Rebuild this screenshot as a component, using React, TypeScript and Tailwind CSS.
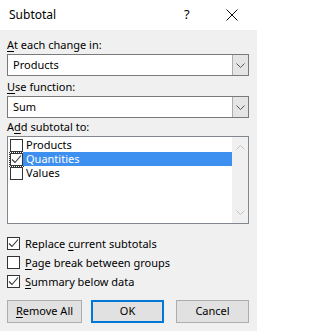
import React from 'react';

const font = { fontFamily: '"Noto Sans", "Open Sans", sans-serif' };

const Check = () => (
    <svg viewBox="0 0 11 11" width="11" height="11">
        <path d="M1 5.5 L4 8.5 L10 1.5" fill="none" stroke="#333" strokeWidth="1.1" />
    </svg>
);

const Box = ({ checked, focus }: { checked?: boolean; focus?: boolean }) => (
    <div className={`w-[13px] h-[13px] shrink-0 bg-white border border-[#333] flex items-center justify-center ${focus ? 'outline outline-1 outline-dotted outline-[#333]' : ''}`}>
        {checked && <Check />}
    </div>
);

const Chevron = ({ up }: { up?: boolean }) => (
    <svg width="9" height="5" viewBox="0 0 9 5">
        <path d={up ? 'M0.5 4.5 L4.5 0.5 L8.5 4.5' : 'M0.5 0.5 L4.5 4.5 L8.5 0.5'} fill="none" stroke="currentColor" strokeWidth="1" />
    </svg>
);

const Combo = ({ value }: { value: string }) => (
    <div className="h-[22px] flex border border-[#7a7a7a] bg-white">
        <div className="flex-1 pl-[5px] flex items-center text-[11px] text-black">{value}</div>
        <div className="w-[16px] bg-[#e5e5e5] border-l border-[#adadad] flex items-center justify-center text-[#555]">
            <Chevron />
        </div>
    </div>
);

const Label = ({ first, rest, className = '' }: { first: string; rest: string; className?: string }) => (
    <div className={`text-[11px] leading-[16px] text-black ${className}`}>
        <span className="underline underline-offset-2">{first}</span>
        {rest}
    </div>
);

const items = [
    { name: 'Products', checked: false },
    { name: 'Quantities', checked: true, selected: true },
    { name: 'Values', checked: false },
];

const options = [
    { pre: 'Replace ', u: 'c', post: 'urrent subtotals', checked: true },
    { pre: '', u: 'P', post: 'age break between groups', checked: false },
    { pre: '', u: 'S', post: 'ummary below data', checked: true },
];

export default function App() {
    return (
        <div className="w-[257px] h-[331px] bg-[#f0f0f0] flex flex-col overflow-hidden" style={font}>
            {/* Title bar */}
            <div className="h-[30px] bg-white flex items-center shrink-0">
                <span className="pl-[9px] text-[12px] text-black flex-1">Subtotal</span>
                <span className="text-[13px] text-black w-[14px] mr-[28px]">?</span>
                <svg width="12" height="12" viewBox="0 0 12 12" className="mr-[19px]">
                    <path d="M0.5 0.5 L11.5 11.5 M11.5 0.5 L0.5 11.5" stroke="#111" strokeWidth="1" />
                </svg>
            </div>

            {/* Body */}
            <div className="pl-[7px] pr-[8px] pt-[7px] flex flex-col">
                <Label first="A" rest="t each change in:" className="h-[17px]" />
                <Combo value="Products" />
                <Label first="U" rest="se function:" className="h-[17px] mt-[3px]" />
                <Combo value="Sum" />
                <div className="h-[18px] text-[11px] leading-[18px] text-black">
                    A<span className="underline underline-offset-2">d</span>d subtotal to:
                </div>

                {/* List */}
                <div className="h-[88px] border border-[#828790] bg-white flex">
                    <div className="flex-1 pl-[2px] pt-[1px] flex flex-col">
                        {items.map((it) => (
                            <div key={it.name} className="h-[14px] flex items-center">
                                <Box checked={it.checked} focus={it.selected} />
                                <div className={`flex-1 h-[14px] pl-[3px] flex items-center text-[11px] leading-[14px] ${it.selected ? 'bg-[#3d90ef] text-white' : 'text-black'}`}>
                                    {it.name}
                                </div>
                            </div>
                        ))}
                    </div>
                    <div className="w-[16px] bg-[#f0f0f0] flex flex-col items-center justify-between py-[8px] text-[#c2c2c2]">
                        <Chevron up />
                        <Chevron />
                    </div>
                </div>

                {/* Options */}
                <div className="mt-[10px] flex flex-col">
                    {options.map((o) => (
                        <div key={o.post} className="h-[19px] flex items-center gap-[5px] text-[11px] leading-[16px] text-black">
                            <Box checked={o.checked} />
                            <span>
                                {o.pre}
                                <span className="underline underline-offset-2">{o.u}</span>
                                {o.post}
                            </span>
                        </div>
                    ))}
                </div>

                {/* Buttons */}
                <div className="mt-[9px] flex h-[23px] text-[11px] text-black">
                    <button className="w-[75px] bg-[#e1e1e1] border border-[#adadad]">
                        <span className="underline underline-offset-2">R</span>emove All
                    </button>
                    <button className="w-[73px] ml-[9px] bg-[#e1e1e1] border-2 border-[#0078d7]">OK</button>
                    <button className="w-[73px] ml-[12px] bg-[#e1e1e1] border border-[#adadad]">Cancel</button>
                </div>
            </div>
        </div>
    );
}
